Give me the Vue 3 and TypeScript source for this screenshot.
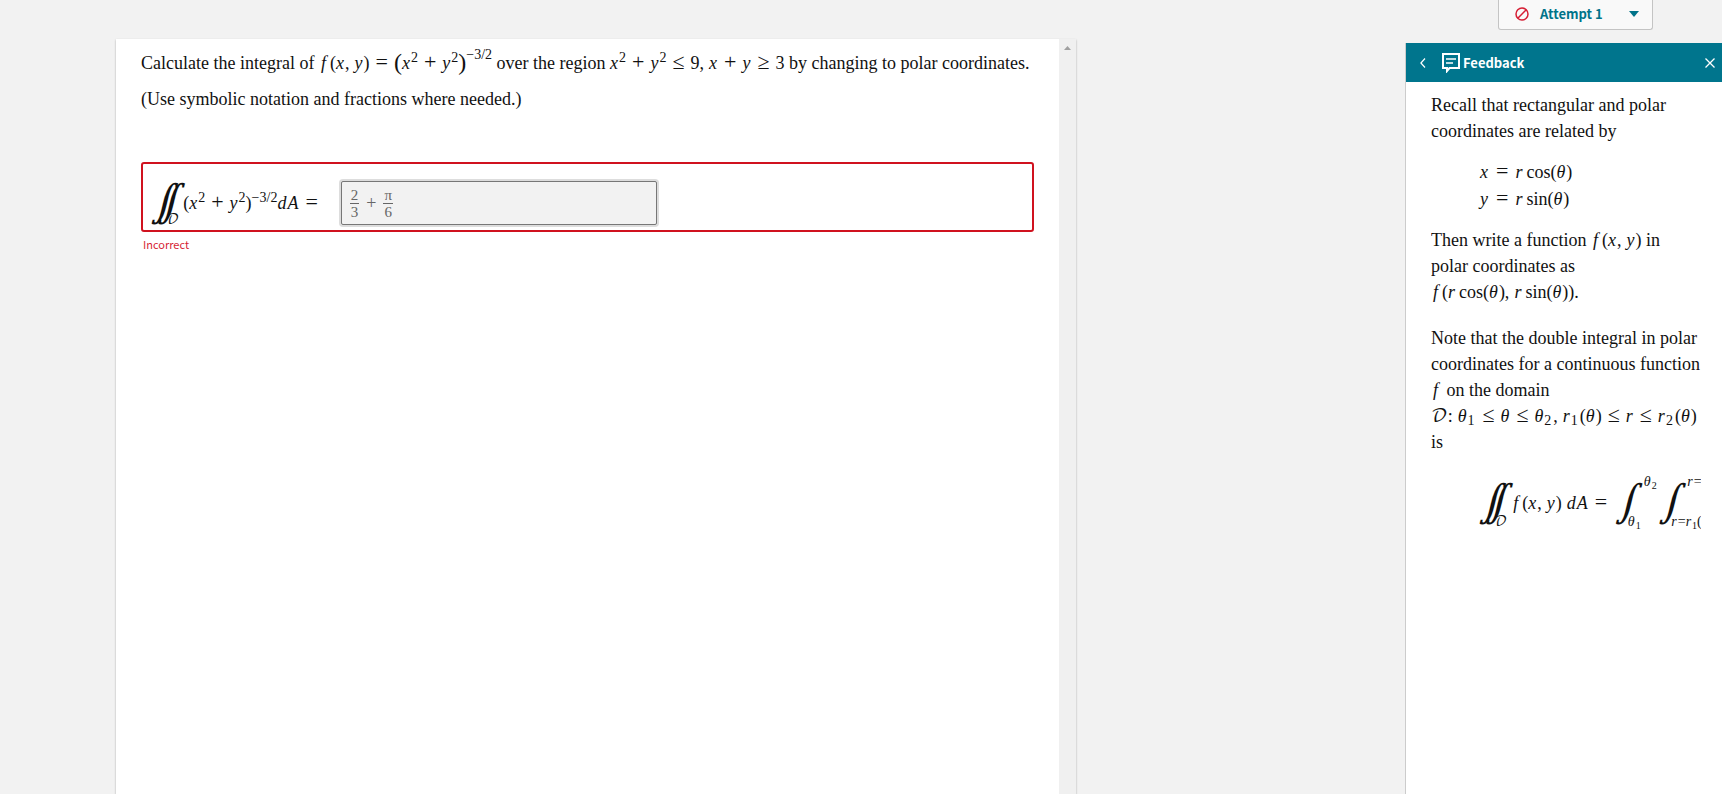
<script setup lang="ts">
import { ref } from 'vue'

const answer = ref('')
const feedbackOpen = ref(true)
</script>

<template>
  <div class="page">
    <header class="topbar">
      <button type="button" class="attempt">
        <svg class="attempt-icon" viewBox="0 0 14 14" aria-hidden="true">
          <circle cx="7" cy="7" r="6" />
          <path d="M2.8 11.2 11.2 2.8" />
        </svg>
        <span>Attempt 1</span>
        <svg class="caret" viewBox="0 0 10 6" aria-hidden="true"><path d="M0 0h10L5 6z" /></svg>
      </button>
    </header>

    <main class="card">
      <section class="question">
        <p class="prompt">Calculate the integral of <span class="math"><i class="f">f</i>(<i>x</i>,<i class="thin">y</i>)<span class="rel">=</span><span class="big">(</span><i>x</i><sup>2</sup><span class="rel">+</span><i>y</i><sup>2</sup><span class="big">)</span><sup class="high">−3/2</sup></span> over the region <span class="math"><i>x</i><sup>2</sup><span class="rel">+</span><i>y</i><sup>2</sup><span class="rel">≤</span>9,<i class="thin">x</i><span class="rel">+</span><i>y</i><span class="rel">≥</span>3</span> by changing to polar coordinates.</p>
        <p class="prompt">(Use symbolic notation and fractions where needed.)</p>

        <div class="answer">
          <label class="math equation" for="answer"><span class="int double"><span class="sign">∫</span><span class="sign">∫</span></span><span class="limits single"><span class="cal">𝒟</span></span><span>(<i>x</i><sup>2</sup><span class="rel">+</span><i>y</i><sup>2</sup>)<sup>−3/2</sup><i>d</i><i>A</i><span class="rel">=</span></span></label>
          <div class="field">
            <input id="answer" v-model="answer" type="text" disabled />
            <span class="value">
              <span class="frac"><span>2</span><span>3</span></span>
              <span>+</span>
              <span class="frac"><span>π</span><span>6</span></span>
            </span>
          </div>
        </div>
        <p class="status">Incorrect</p>
      </section>
      <div class="scroll" aria-hidden="true">
        <svg viewBox="0 0 7 4"><path d="M0 4h7L3.500 0z" /></svg>
      </div>
    </main>

    <aside v-if="feedbackOpen" class="feedback">
      <div class="feedback-head">
        <button type="button" class="icon-button" aria-label="Back">
          <svg class="chevron" viewBox="0 0 6 10"><path d="M5 .5.900 5 5 9.500" /></svg>
        </button>
        <svg class="bubble" viewBox="0 0 18 20" aria-hidden="true">
          <path class="outline" d="M1 1h16v14H7.500L5 18v-3H1z" />
          <path class="lines" d="M4 6h10M4 10h7" />
        </svg>
        <h2>Feedback</h2>
        <button type="button" class="icon-button close" aria-label="Close" @click="feedbackOpen = false">
          <svg class="cross" viewBox="0 0 10 10"><path d="m.5.5 9 9M9.500.5l-9 9" /></svg>
        </button>
      </div>
      <div class="feedback-body">
        <p>Recall that rectangular and polar coordinates are related by</p>
        <div class="system math">
          <div><i>x</i><span class="rel">=</span><i>r</i><span class="fn">cos(</span><i>θ</i>)</div>
          <div><i>y</i><span class="rel">=</span><i>r</i><span class="fn">sin(</span><i>θ</i>)</div>
        </div>
        <p>Then write a function <span class="math"><i class="f">f</i>(<i>x</i>,<i class="thin">y</i>)</span> in polar coordinates as <span class="math"><i class="f">f</i>(<i>r</i><span class="fn">cos(</span><i>θ</i>),<i class="thin">r</i><span class="fn">sin(</span><i>θ</i>)).</span></p>
        <p class="note">Note that the double integral in polar coordinates for a continuous function <span class="math"><i class="f">f</i></span> on the domain <span class="math"><span class="cal">𝒟</span>:<i class="thin">θ</i><sub>1</sub><span class="rel">≤</span><i>θ</i><span class="rel">≤</span><i>θ</i><sub>2</sub>,<i class="thin">r</i><sub>1</sub>(<i>θ</i>)<span class="rel">≤</span><i>r</i><span class="rel">≤</span><i>r</i><sub>2</sub>(<i>θ</i>)</span> is</p>
        <div class="formula math"><span class="int double"><span class="sign">∫</span><span class="sign">∫</span></span><span class="limits single"><span class="cal">𝒟</span></span><span class="integrand"><i class="f">f</i>(<i>x</i>,<i class="thin">y</i>)<i class="thin">d</i><i>A</i><span class="rel">=</span></span><span class="int"><span class="sign">∫</span></span><span class="limits"><span class="upper"><i>θ</i><sub>2</sub></span><span><i>θ</i><sub>1</sub></span></span><span class="int"><span class="sign">∫</span></span><span class="limits"><span class="upper"><i>r</i>=<i>r</i><sub>2</sub>(<i>θ</i>)</span><span><i>r</i>=<i>r</i><sub>1</sub>(<i>θ</i>)</span></span></div>
      </div>
    </aside>
  </div>
</template>

<style>
body {
  margin: 0;
  background: #f2f2f2;
}
</style>

<style scoped>
.page {
  display: grid;
  grid-template-columns: minmax(0, 1076px) minmax(0, 1fr) 317px;
  grid-template-rows: 39px 1fr;
  height: 100vh;
  overflow: hidden;
  color: #111;
  font: 18px/26px "Liberation Serif", serif;
}

.topbar {
  grid-column: 1 / -1;
  display: flex;
  justify-content: flex-end;
  align-items: flex-start;
  padding-right: 69px;
}

.attempt {
  display: flex;
  align-items: center;
  width: 155px;
  height: 30px;
  padding: 0 13px 2px 16px;
  border: 1px solid #c4c4c4;
  border-top: 0;
  border-radius: 0 0 3px 3px;
  background: #f9f9f9;
  color: #007389;
  font: bold 13px/20px "Noto Sans CJK SC", "Noto Sans", sans-serif;
}

.attempt-icon {
  width: 14px;
  height: 14px;
  margin-right: 11px;
  fill: none;
  stroke: #d61f35;
  stroke-width: 1.5;
}

.caret {
  width: 10px;
  height: 6px;
  margin-left: auto;
  fill: #007389;
}

.card {
  display: flex;
  margin-left: 116px;
  background: #fff;
  box-shadow: 0 1px 2px rgba(0, 0, 0, 0.3);
}

.question {
  flex: 1;
  min-width: 0;
  padding: 11px 25px;
}

.prompt {
  margin: 0 0 10px;
}

.scroll {
  width: 17px;
  background: #f0f0f0;
  text-align: center;
  line-height: 0;
}

.scroll svg {
  width: 7px;
  height: 4px;
  margin-top: 7px;
  fill: #a0a0a0;
}

.answer {
  display: flex;
  align-items: center;
  margin-top: 50px;
  padding: 13px 8px 1px;
  border: 2px solid #d0121f;
  border-radius: 3px;
}

.equation,
.formula {
  display: flex;
  align-items: center;
}

.field {
  display: grid;
  width: 316px;
  margin: 4px 0 4px 17px;
}

.field input {
  grid-area: 1 / 1;
  box-sizing: border-box;
  width: 100%;
  height: 44px;
  border: 1px solid #777;
  border-radius: 2px;
  background: #f2f2f2;
  box-shadow: 0 0 0 2px #ddd;
}

.value {
  grid-area: 1 / 1;
  display: flex;
  align-items: center;
  gap: 7px;
  padding-left: 9px;
  color: #666;
}

.frac {
  display: grid;
  font-size: 15px;
  line-height: 16px;
  text-align: center;
}

.frac span {
  padding: 0 1px;
}

.frac span + span {
  border-top: 1px solid #666;
}

.status {
  margin: 3px 2px;
  color: #d61f35;
  font: 11px/18px "Noto Sans CJK SC", "Noto Sans", sans-serif;
}

.math {
  white-space: nowrap;
}

.math i {
  padding-right: 1px;
}

.cal {
  font-family: "DejaVu Math TeX Gyre", "Liberation Serif", serif;
  line-height: 0;
}

.rel {
  margin: 0 6px;
  font-size: 22px;
  line-height: 0;
}

.thin {
  margin-left: 5px;
}

.fn {
  margin-left: 3px;
}

.f {
  margin: 0 3px 0 2px;
}

sup,
sub {
  font-size: 14px;
  line-height: 0;
}

sup {
  vertical-align: 7px;
}

sub {
  margin-right: 2px;
  vertical-align: -3px;
}

sup.high {
  vertical-align: 10px;
}

.big {
  font-size: 24px;
  line-height: 0;
  vertical-align: -1px;
}

.int {
  display: flex;
  height: 46px;
  font-family: "DejaVu Math TeX Gyre", "DejaVu Serif", serif;
  font-size: 38px;
  font-style: italic;
  line-height: 46px;
}

.double .sign + .sign {
  margin-left: -16px;
}

.limits {
  display: flex;
  flex-direction: column;
  justify-content: space-between;
  box-sizing: border-box;
  height: 52px;
  margin: 0 2px 0 -10px;
  padding-bottom: 2px;
  font-size: 14px;
  line-height: 14px;
}

.limits .upper {
  margin-left: 16px;
}

.limits sub {
  margin-right: 0;
  font-size: 10px;
}

.limits .cal {
  line-height: 14px;
}

.limits.single {
  justify-content: flex-end;
  margin: 0 4px 0 -14px;
}

.feedback {
  grid-column: 3;
  min-width: 0;
  margin-top: 4px;
  border-left: 1px solid #ccc;
  background: #fff;
}

.feedback-head {
  display: flex;
  align-items: center;
  height: 39px;
  padding-left: 9px;
  background: #00758d;
  color: #fff;
}

.feedback-head h2 {
  margin: 0 0 0 3px;
  font: bold 13px/20px "Noto Sans CJK SC", "Noto Sans", sans-serif;
}

.icon-button {
  display: grid;
  place-items: center;
  width: 16px;
  height: 24px;
  padding: 0;
  border: 0;
  background: none;
}

.icon-button svg,
.bubble {
  fill: none;
  stroke: #fff;
}

.chevron {
  width: 6px;
  height: 10px;
  stroke-width: 1.2;
}

.cross {
  width: 10px;
  height: 10px;
  stroke-width: 1.3;
}

.close {
  margin: 0 4px 0 auto;
}

.bubble {
  width: 18px;
  height: 20px;
  margin-left: 11px;
  stroke-width: 2;
}

.bubble .lines {
  stroke-width: 1.5;
}

.feedback-body {
  margin: 10px 21px 0 25px;
  overflow: hidden;
}

.feedback-body p {
  margin: 0;
}

.system {
  margin: 15px 0 14px 49px;
  line-height: 27px;
}

.system .rel {
  margin: 0 7px;
}

.feedback-body .note {
  margin-top: 20px;
}

.formula {
  margin: 20px 0 0 48px;
}

.formula .limits {
  height: 56px;
}

.integrand {
  margin-right: 2px;
}
</style>
